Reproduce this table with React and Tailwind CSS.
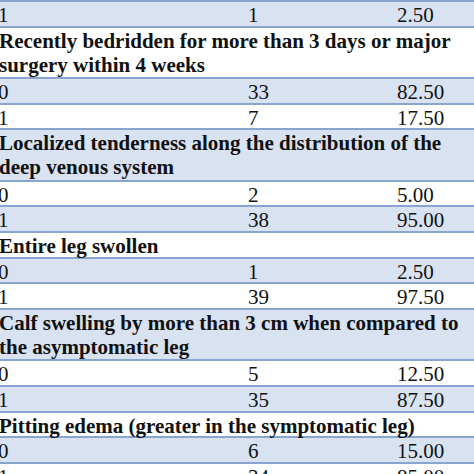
import React from "react";

const rows = [
  { t: "r", bg: true, c: ["1", "1", "2.50"] },
  { t: "h", bg: false, text: "Recently bedridden for more than 3 days or major surgery within 4 weeks" },
  { t: "r", bg: true, c: ["0", "33", "82.50"] },
  { t: "r", bg: false, c: ["1", "7", "17.50"] },
  { t: "h", bg: true, text: "Localized tenderness along the distribution of the deep venous system" },
  { t: "r", bg: false, c: ["0", "2", "5.00"] },
  { t: "r", bg: true, c: ["1", "38", "95.00"] },
  { t: "h1", bg: false, text: "Entire leg swollen" },
  { t: "r", bg: true, c: ["0", "1", "2.50"] },
  { t: "r", bg: false, c: ["1", "39", "97.50"] },
  { t: "h", bg: true, text: "Calf swelling by more than 3 cm when compared to the asymptomatic leg" },
  { t: "r", bg: false, c: ["0", "5", "12.50"] },
  { t: "r", bg: true, c: ["1", "35", "87.50"] },
  { t: "h1", bg: false, text: "Pitting edema (greater in the symptomatic leg)" },
  { t: "r", bg: true, c: ["0", "6", "15.00"] },
  { t: "r", bg: false, c: ["1", "34", "85.00"] },
];

export default function App() {
  return (
    <div
      className="w-[474px] h-[474px] overflow-hidden bg-white text-[#111]"
      style={{ fontFamily: '"Liberation Serif", "Times New Roman", serif' }}
    >
      <div className="border-t-2 border-[#88a5d1]">
        {rows.map((r, i) => {
          const bg = r.bg ? "bg-[#d8e2f1]" : "bg-white";
          if (r.t === "r") {
            return (
              <div
                key={i}
                className={`${bg} border-b-2 border-[#88a5d1] h-[25.67px] grid grid-cols-[248px_149px_1fr] text-[21px] leading-[24px] pt-[1px] -ml-[2px]`}
              >
                <div>{r.c[0]}</div>
                <div className="pl-[2px]">{r.c[1]}</div>
                <div className="pl-[2px]">{r.c[2]}</div>
              </div>
            );
          }
          return (
            <div
              key={i}
              className={`${bg} border-b-2 border-[#88a5d1] ${r.t === "h" ? "h-[51.33px]" : "h-[25.67px]"} font-bold text-[21px] leading-[24px] pt-[1px] pr-[4px] -ml-[1px]`}
            >
              {r.text}
            </div>
          );
        })}
      </div>
    </div>
  );
}
